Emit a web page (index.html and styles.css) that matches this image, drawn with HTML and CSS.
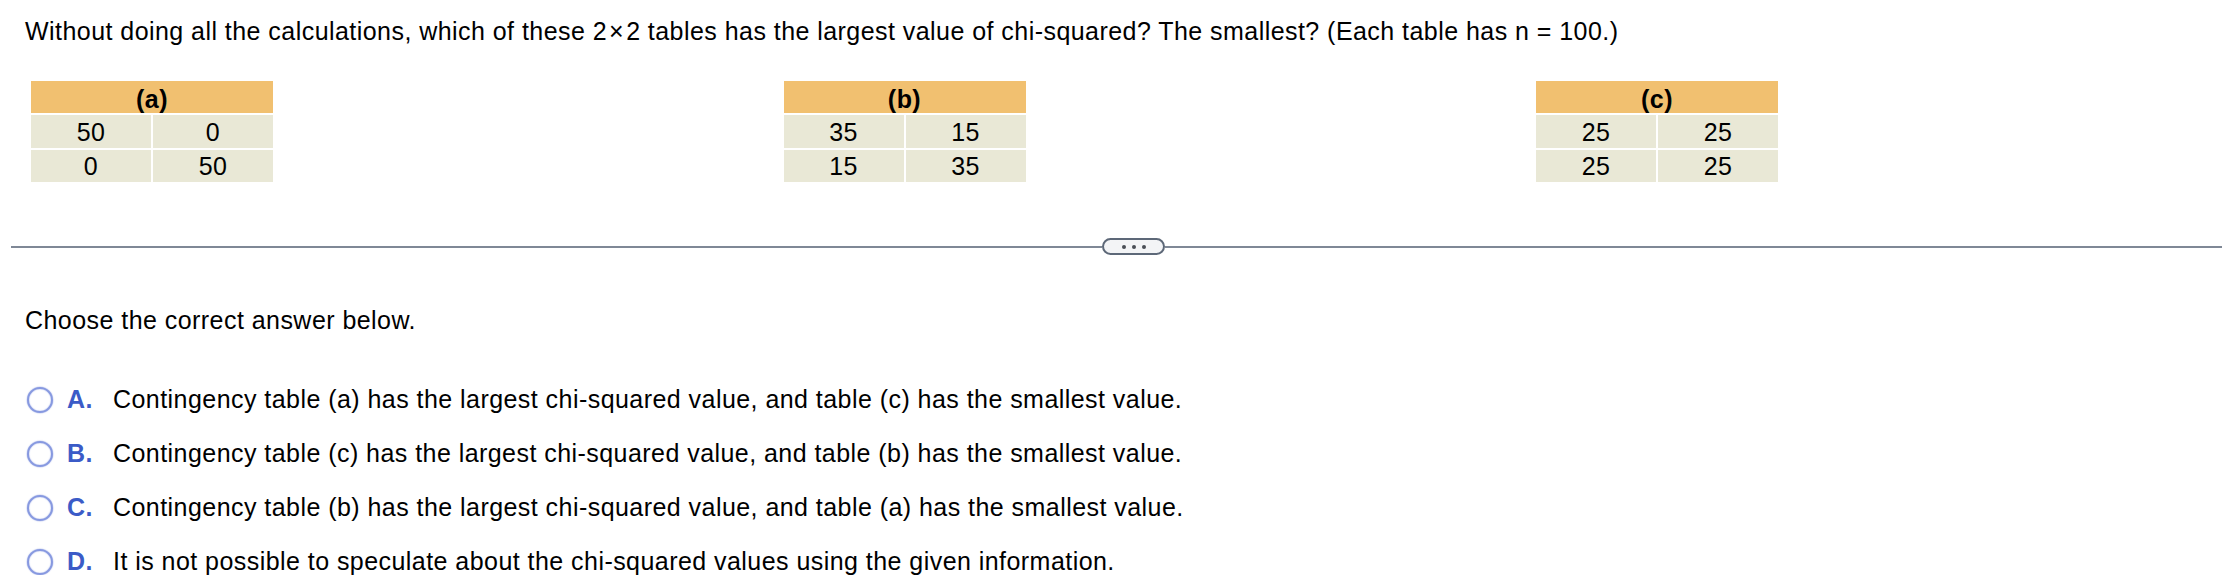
FILE: index.html
```html
<!DOCTYPE html>
<html lang="en">
<head>
<meta charset="utf-8">
<title>Chi-squared question</title>
<link rel="stylesheet" href="styles.css">
</head>
<body>
<div class="page">
  <p class="question">Without doing all the calculations, which of these 2<span class="times">×</span>2 tables has the largest value of chi-squared? The smallest? (Each table has n = 100.)</p>

  <div class="tables">
    <div class="ctable">
      <div class="chead">(a)</div>
      <div class="cell">50</div><div class="cell">0</div>
      <div class="cell">0</div><div class="cell">50</div>
    </div>
    <div class="ctable">
      <div class="chead">(b)</div>
      <div class="cell">35</div><div class="cell">15</div>
      <div class="cell">15</div><div class="cell">35</div>
    </div>
    <div class="ctable">
      <div class="chead">(c)</div>
      <div class="cell">25</div><div class="cell">25</div>
      <div class="cell">25</div><div class="cell">25</div>
    </div>
  </div>

  <div class="divider">
    <div class="line line-left"></div>
    <div class="more"><span class="dot"></span><span class="dot"></span><span class="dot"></span></div>
    <div class="line line-right"></div>
  </div>

  <p class="prompt">Choose the correct answer below.</p>

  <ul class="options">
    <li class="option"><span class="radio"></span><span class="letter">A.</span><span class="otext">Contingency table (a) has the largest chi-squared value, and table (c) has the smallest value.</span></li>
    <li class="option"><span class="radio"></span><span class="letter">B.</span><span class="otext">Contingency table (c) has the largest chi-squared value, and table (b) has the smallest value.</span></li>
    <li class="option"><span class="radio"></span><span class="letter">C.</span><span class="otext">Contingency table (b) has the largest chi-squared value, and table (a) has the smallest value.</span></li>
    <li class="option"><span class="radio"></span><span class="letter">D.</span><span class="otext">It is not possible to speculate about the chi-squared values using the given information.</span></li>
  </ul>
</div>
</body>
</html>
```

FILE: styles.css
```css
* { box-sizing: border-box; }

html, body {
  margin: 0;
  padding: 0;
  background: #ffffff;
}

body {
  font-family: "Liberation Sans", Arial, sans-serif;
  font-size: 25px;
  line-height: 28px;
  letter-spacing: 0.45px;
  color: #000000;
}

.page {
  padding-top: 17px;
}

.question {
  margin: 0;
  padding-left: 25px;
  white-space: nowrap;
}

.times {
  padding: 0 2px;
}

.tables {
  display: grid;
  grid-template-columns: repeat(3, 242px);
  column-gap: 510.5px;
  margin-top: 36px;
  padding-left: 31px;
}

.ctable {
  display: grid;
  grid-template-columns: 120px 120px;
  grid-template-rows: 32px 33px 32px;
  gap: 2px;
}

.chead {
  grid-column: 1 / span 2;
  background: #f1c070;
  font-weight: bold;
  text-align: center;
  padding-top: 4px;
}

.cell {
  background: #e9e8d6;
  text-align: center;
  display: flex;
  align-items: center;
  justify-content: center;
}

.divider {
  display: flex;
  align-items: center;
  height: 17px;
  margin-top: 56px;
  padding-left: 11px;
}

.line {
  height: 2px;
  background: #7f8896;
}

.line-left {
  width: 1091px;
}

.line-right {
  flex: 1;
}

.more {
  width: 63px;
  height: 17px;
  border: 2px solid #5d6878;
  border-radius: 9px;
  background: #f3f4f6;
  display: flex;
  align-items: center;
  justify-content: center;
  gap: 6px;
}

.dot {
  width: 4px;
  height: 4px;
  border-radius: 50%;
  background: #4a4e56;
}

.prompt {
  margin: 51px 0 0 0;
  padding-left: 25px;
}

.options {
  list-style: none;
  margin: 51px 0 0 0;
  padding: 0;
  display: flex;
  flex-direction: column;
  gap: 26px;
}

.option {
  display: flex;
  align-items: center;
  height: 28px;
  padding-left: 27px;
  white-space: nowrap;
}

.radio {
  width: 26px;
  height: 26px;
  margin-top: 2px;
  border-radius: 50%;
  border: 2.5px solid #8799e0;
  box-shadow: 0 0 1px 0.5px rgba(135, 153, 224, 0.45), inset 0 0 1px 0.5px rgba(135, 153, 224, 0.35);
  background: #ffffff;
  flex: none;
}

.letter {
  margin-left: 14px;
  width: 46px;
  font-weight: bold;
  color: #3b5bc7;
  flex: none;
}

.otext {
  color: #000000;
}
```
